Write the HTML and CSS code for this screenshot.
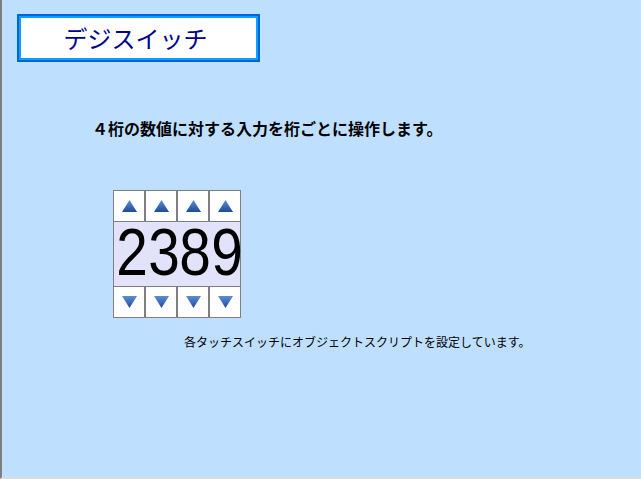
FILE: index.html
```html
<!DOCTYPE html>
<html lang="ja">
<head>
<meta charset="utf-8">
<link rel="stylesheet" href="styles.css">
</head>
<body>
<div class="frame">
  <div class="title">デジスイッチ</div>
  <p class="lead">４桁の数値に対する入力を桁ごとに操作します。</p>
  <div class="widget">
    <button class="btn"><svg viewBox="0 0 15 12" width="15" height="12"><defs><linearGradient id="gu" x1="0" y1="0" x2="0" y2="1"><stop offset="0" stop-color="#5b8fd2"/><stop offset="1" stop-color="#1d4b9a"/></linearGradient></defs><polygon points="7.5,0 15,12 0,12" fill="url(#gu)"/></svg></button>
    <button class="btn"><svg viewBox="0 0 15 12" width="15" height="12"><polygon points="7.5,0 15,12 0,12" fill="url(#gu)"/></svg></button>
    <button class="btn"><svg viewBox="0 0 15 12" width="15" height="12"><polygon points="7.5,0 15,12 0,12" fill="url(#gu)"/></svg></button>
    <button class="btn"><svg viewBox="0 0 15 12" width="15" height="12"><polygon points="7.5,0 15,12 0,12" fill="url(#gu)"/></svg></button>
    <div class="display">
      <span class="digit">2</span><span class="digit">3</span><span class="digit">8</span><span class="digit">9</span>
    </div>
    <button class="btn"><svg viewBox="0 0 15 12" width="15" height="12"><defs><linearGradient id="gd" x1="0" y1="0" x2="0" y2="1"><stop offset="0" stop-color="#5b8fd2"/><stop offset="1" stop-color="#1d4b9a"/></linearGradient></defs><polygon points="0,0 15,0 7.5,12" fill="url(#gd)"/></svg></button>
    <button class="btn"><svg viewBox="0 0 15 12" width="15" height="12"><polygon points="0,0 15,0 7.5,12" fill="url(#gd)"/></svg></button>
    <button class="btn"><svg viewBox="0 0 15 12" width="15" height="12"><polygon points="0,0 15,0 7.5,12" fill="url(#gd)"/></svg></button>
    <button class="btn"><svg viewBox="0 0 15 12" width="15" height="12"><polygon points="0,0 15,0 7.5,12" fill="url(#gd)"/></svg></button>
  </div>
  <p class="note">各タッチスイッチにオブジェクトスクリプトを設定しています。</p>
</div>
</body>
</html>
```

FILE: styles.css
```css
html, body {
  margin: 0;
  padding: 0;
  background: #bfdfff;
}
.frame {
  box-sizing: border-box;
  width: 641px;
  height: 479px;
  border-left: 2px solid #7f7f7f;
  border-bottom: 2px solid #dcdcdc;
  padding-top: 14px;
  overflow: hidden;
  font-family: "Noto Sans CJK JP", sans-serif;
}
.title {
  box-sizing: border-box;
  width: 243px;
  height: 48px;
  margin-left: 15px;
  padding-right: 6px;
  background: #ffffff;
  border: 2px solid #0064dc;
  box-shadow: inset 0 0 0 2px #0aa0ff;
  color: #000090;
  font-size: 24px;
  line-height: 44px;
  text-align: center;
}
.lead {
  margin: 58px 0 0 90px;
  font-size: 16px;
  line-height: 16px;
  font-weight: bold;
  color: #000000;
}
.widget {
  display: grid;
  grid-template-columns: repeat(4, 32px);
  grid-template-rows: 32px 64px 32px;
  margin: 54px 0 0 111px;
  width: 128px;
}
.btn {
  box-sizing: border-box;
  margin: 0;
  padding: 0;
  width: 32px;
  height: 32px;
  background: #ffffff;
  border: 1px solid #7f7f7f;
  display: flex;
  align-items: center;
  justify-content: center;
}
.display {
  grid-column: 1 / 5;
  box-sizing: border-box;
  display: flex;
  background: #e2e2fa;
  border-left: 1px solid #7f7f7f;
  border-right: 1px solid #7f7f7f;
}
.digit {
  width: 31.5px;
  text-align: center;
  font-family: "Liberation Sans", Arial, sans-serif;
  font-size: 66px;
  line-height: 61px;
  color: #000000;
  display: inline-block;
  transform: scaleX(0.86);
}
.note {
  margin: 18px 0 0 182px;
  font-size: 12px;
  line-height: 12px;
  color: #000000;
}
```
